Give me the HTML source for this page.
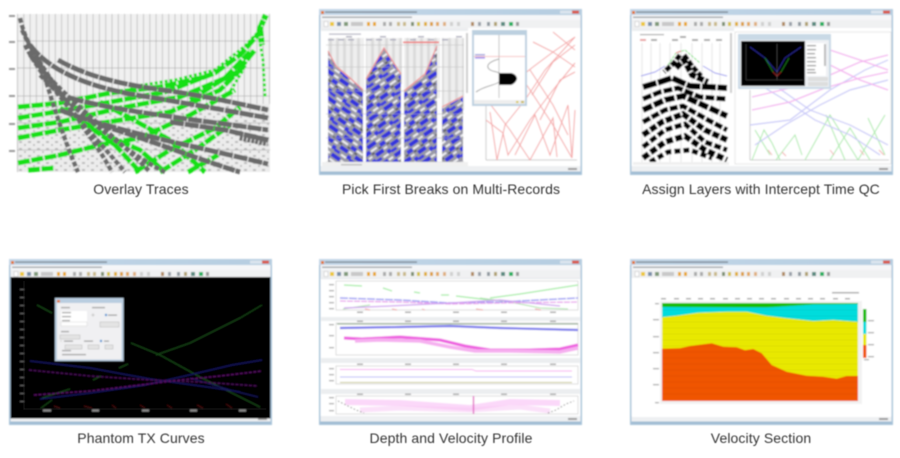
<!DOCTYPE html>
<html>
<head>
<meta charset="utf-8">
<style>
html,body{margin:0;padding:0;background:#fff;width:900px;height:458px;overflow:hidden}
#s{position:absolute;left:0;top:0}
.c{position:absolute;font:14px/16px "Liberation Sans",sans-serif;letter-spacing:.1px;color:#333;white-space:nowrap;transform:translateX(-50%);filter:blur(.4px)}
</style>
</head>
<body>
<svg id="s" width="900" height="458" viewBox="0 0 900 458" xmlns="http://www.w3.org/2000/svg">
<defs>
<filter id="b" x="-5%" y="-5%" width="110%" height="110%"><feGaussianBlur stdDeviation="0.75"/></filter>
<linearGradient id="tb" x1="0" y1="0" x2="1" y2="0"><stop offset="0" stop-color="#c3d7e8"/><stop offset="1" stop-color="#b5cde0"/></linearGradient>
<pattern id="grid1" width="6.3" height="158" patternUnits="userSpaceOnUse" x="17" y="14"><rect width="6.3" height="158" fill="#f1f1f1"/><rect width="1" height="158" fill="#c4c4c4"/></pattern>
<pattern id="speck" width="9" height="7" patternUnits="userSpaceOnUse"><rect width="9" height="7" fill="#ececec"/><rect x="1" y="1" width="3" height="2" fill="#bcbcbc"/><rect x="6" y="4" width="2" height="2" fill="#c4c4c4"/></pattern>
<g id="sp"><rect width="18" height="22" fill="#9a9aa6"/><rect x="0" y="0" width="10" height="4" fill="#3636dc"/><rect x="12" y="5" width="6" height="4" fill="#3a3ae0"/><rect x="3" y="11" width="9" height="4" fill="#3636dc"/><rect x="14" y="15" width="4" height="4" fill="#3a3ae0"/><rect x="0" y="17" width="6" height="3" fill="#4040e0"/><rect x="11" y="1" width="5" height="2" fill="#eeeef2"/><rect x="1" y="6" width="7" height="2" fill="#eeeef2"/><rect x="13" y="11" width="4" height="2" fill="#e8e8ee"/><rect x="8" y="18" width="6" height="2" fill="#eeeef2"/><rect x="0" y="9" width="3" height="2" fill="#606068"/><rect x="9" y="8" width="3" height="2" fill="#606068"/></g>
<pattern id="seis" width="18" height="22" patternUnits="userSpaceOnUse" patternTransform="rotate(35)"><use href="#sp"/></pattern>
<pattern id="seis2" width="18" height="22" patternUnits="userSpaceOnUse" patternTransform="rotate(-35)"><use href="#sp"/></pattern>
<pattern id="vs" width="7" height="10" patternUnits="userSpaceOnUse"><rect width="7" height="10" fill="#efefef"/><rect width="3" height="10" fill="#dcdcdc"/></pattern>
<g id="win">
<rect width="263" height="166" fill="#a8c3d9"/>
<rect x="0" y="0" width="263" height="6" fill="url(#tb)"/>
<rect x="2" y="2" width="3" height="3" fill="#e2762a"/>
<rect x="6" y="2.4" width="92" height="1.4" fill="#7d8894"/>
<rect x="241" y="1.6" width="6" height="3" fill="#dbe5ee"/>
<rect x="247" y="1.6" width="6" height="3" fill="#dbe5ee"/>
<rect x="253" y="1.6" width="7" height="3" fill="#d9574a"/>
<rect x="1.5" y="6" width="260" height="158" fill="#fff"/>
<rect x="1.5" y="6" width="260" height="5" fill="#f5f6f8"/>
<rect x="3" y="7.6" width="90" height="1.3" fill="#999ea5"/>
<rect x="1.5" y="11" width="260" height="8" fill="#f0f1f2"/>
<rect x="5" y="12.5" width="4" height="5" fill="#fff" stroke="#bbb" stroke-width=".5"/>
<rect x="11" y="13" width="4" height="4" fill="#ecc838"/>
<rect x="18" y="13" width="4" height="4" fill="#7a8fa8"/>
<rect x="25" y="13" width="4" height="4" fill="#7f9a78"/>
<rect x="32" y="13" width="12" height="4" fill="#c8c8c8"/>
<rect x="48" y="13" width="3" height="4" fill="#e8a820"/>
<rect x="54" y="13" width="3" height="4" fill="#e8a820"/>
<rect x="64" y="13" width="3" height="4" fill="#aaa"/>
<rect x="70" y="13" width="3" height="4" fill="#aaa"/>
<rect x="78" y="13" width="3" height="4" fill="#c9b98a"/>
<rect x="84" y="13" width="3" height="4" fill="#c9b98a"/>
<rect x="92" y="13" width="3" height="4" fill="#7d8f70"/>
<rect x="98" y="13" width="3" height="4" fill="#d4c040"/>
<rect x="105" y="13" width="3" height="4" fill="#e0b030"/>
<rect x="111" y="13" width="3" height="4" fill="#dca040"/>
<rect x="117" y="13" width="3" height="4" fill="#e2a860"/>
<rect x="124" y="13" width="3" height="4" fill="#e0b080"/>
<rect x="131" y="13" width="3" height="4" fill="#d0d0d0"/>
<rect x="138" y="13" width="3" height="4" fill="#d0d0d0"/>
<rect x="152" y="13" width="3" height="4" fill="#b08a60"/>
<rect x="159" y="13" width="3" height="4" fill="#9aa0a8"/>
<rect x="168" y="13" width="3" height="4" fill="#909aa0"/>
<rect x="175" y="13" width="3" height="4" fill="#b0a070"/>
<rect x="182" y="13" width="4" height="4" fill="#5a8a80"/>
<rect x="190" y="13" width="4" height="4" fill="#20b060"/>
<rect x="197" y="13" width="3" height="4" fill="#999"/>
<rect x="1.5" y="157" width="260" height="5.5" fill="#eef0f2"/>
<rect x="249" y="159" width="9" height="2" fill="#999"/>
<rect x="1.5" y="162.5" width="260" height="2" fill="#9fbcd3"/>
</g>
</defs>

<g filter="url(#b)">
<!-- Panel 1 -->
<rect x="17" y="14" width="253" height="158" fill="url(#grid1)"/>
<rect x="18" y="104" width="252" height="68" fill="url(#speck)"/>
<g stroke="#9d9d9d" stroke-width=".6"><path d="M17 41H270M17 68H270M17 96H270M17 123H270M17 150H270"/></g>
<g fill="#999"><rect x="9" y="15" width="6" height="2"/><rect x="9" y="41" width="6" height="2"/><rect x="9" y="68" width="6" height="2"/><rect x="9" y="95" width="6" height="2"/><rect x="9" y="123" width="6" height="2"/><rect x="9" y="150" width="6" height="2"/></g>
<g fill="none" stroke="#12e012" stroke-linecap="butt">
<g stroke-width="5" stroke-dasharray="12 1.5">
<path d="M18 107L60 103 110 93 160 87 205 77"/>
<path d="M18 118L55 112 105 103 165 92 215 73 240 55 262 30"/>
<path d="M18 128L60 122 120 108 180 97 235 74 255 50"/>
<path d="M18 138L60 130 120 120 170 112 220 90 245 65"/>
<path d="M18 163L60 155 100 145 140 138 190 115 235 90"/>
<path d="M100 102L130 118 170 140 205 172"/>
<path d="M60 108L105 135 140 150 165 172"/>
<path d="M80 120L115 145 140 172"/>
<path d="M135 172L170 150 215 128 240 107"/>
<path d="M160 172L195 150 230 125"/>
<path d="M28 170L55 168"/>
<path d="M188 172L218 155"/>
<path d="M190 100L225 78 250 52"/>
</g>
<g stroke-width="3" stroke-dasharray="3 2">
<path d="M130 87L175 80 215 70 245 46 262 28"/>
<path d="M264 15L258 30 263 60 265 98"/>
<path d="M228 95L243 70 250 50"/>
</g>
<path d="M266 15L260 28 262 45" stroke-width="6" stroke-dasharray="5 1"/>
</g>
<g fill="none" stroke="#6a6a6a">
<g stroke-width="5">
<path d="M58 60C90 78 125 85 170 91 205 96 240 104 268 110" stroke-dasharray="14 1"/>
<path d="M30 45C50 72 90 86 130 94 180 102 235 112 268 118" stroke-dasharray="14 1"/>
<path d="M70 98C120 112 200 120 268 130" stroke-dasharray="14 1"/>
<path d="M60 110C110 130 190 145 268 164" stroke-dasharray="14 1"/>
<path d="M100 125C150 140 200 160 240 172" stroke-dasharray="12 1"/>
<path d="M170 122L225 130 268 140" stroke-dasharray="14 1"/>
</g>
<g stroke-width="4.5" stroke-dasharray="5 2">
<path d="M20 18C24 35 30 48 40 62 52 100 62 135 78 172"/>
<path d="M22 30C35 60 70 105 85 130 100 150 108 165 112 172"/>
<path d="M25 45C45 85 85 125 125 172"/>
<path d="M30 55C60 95 115 135 150 172"/>
<path d="M40 75C80 115 130 155 165 172"/>
</g>
<path d="M240 136L268 142" stroke-width="9" stroke-dasharray="3 1"/>
</g>

<!-- Panel 2 -->
<use href="#win" x="319" y="9"/>
<rect x="321" y="28" width="147" height="3" fill="#eceef0"/>
<rect x="323" y="33" width="140" height="130" fill="#fff"/>
<rect x="328" y="38" width="36" height="58" fill="url(#vs)"/>
<rect x="366" y="38" width="36" height="46" fill="url(#vs)"/>
<rect x="404" y="38" width="36" height="60" fill="url(#vs)"/>
<rect x="442" y="38" width="22" height="72" fill="url(#vs)"/>
<path d="M328 52L336 67 350 79 363 90V162H328Z" fill="url(#seis)"/>
<path d="M366 80L384 49 401 75V162H366Z" fill="url(#seis2)"/>
<path d="M404 92L425 75 437 47V162H404Z" fill="url(#seis2)"/>
<path d="M442 108L463 97V162H442Z" fill="url(#seis2)"/>
<g fill="none" stroke="#f09090" stroke-width="1.2"><path d="M328 51L336 66 350 78 363 90"/><path d="M366 79L384 48 401 74"/><path d="M404 91L425 74 437 46"/><path d="M442 107L463 96"/></g>
<rect x="403" y="41.5" width="36" height="1.6" fill="#f07878"/>
<g fill="#b0b0c0"><rect x="328" y="39" width="6" height="1.5"/><rect x="338" y="39" width="6" height="1.5"/><rect x="348" y="39" width="6" height="1.5"/><rect x="366" y="39" width="6" height="1.5"/><rect x="376" y="39" width="6" height="1.5"/><rect x="390" y="39" width="6" height="1.5"/><rect x="410" y="39" width="6" height="1.5"/><rect x="428" y="39" width="6" height="1.5"/><rect x="442" y="39" width="6" height="1.5"/><rect x="346" y="36" width="6" height="1.5"/><rect x="380" y="36" width="6" height="1.5"/><rect x="418" y="36" width="6" height="1.5"/><rect x="456" y="36" width="6" height="1.5"/><rect x="329" y="33.5" width="32" height="1.2"/></g>
<g stroke="#bbb" stroke-width=".5"><path d="M326 45H464M326 67H464M326 91H464M326 114H464M326 138H464M326 162H464"/></g>
<rect x="466" y="33" width="2" height="60" fill="#ccc"/>
<rect x="322" y="162" width="146" height="4" fill="#f0f0f0"/>
<rect x="341" y="164" width="21" height="1.4" fill="#bbb"/>
<rect x="469" y="31" width="108" height="134" fill="#fff"/>
<path d="M486 36V160H577" fill="none" stroke="#999" stroke-width=".5"/>
<g fill="none" stroke="#f4a4a4" stroke-width="1">
<path d="M486 120L503 133 508 155 530 120 553 90 575 63"/>
<path d="M487 100L510 130 530 160"/>
<path d="M497 160L505 125 525 100 545 70 575 37"/>
<path d="M490 112L497 160"/>
<path d="M515 155L535 115 550 155 568 105 572 158 575 110"/>
<path d="M530 160L553 118 557 157"/>
<path d="M510 60L530 90 553 125 572 158"/>
<path d="M530 70L553 105 568 135"/>
<path d="M533 42L553 52 575 67"/>
<path d="M553 32L575 50"/>
<path d="M575 37L553 52 533 67 510 85"/>
<path d="M532 95L553 62 575 45"/>
<path d="M540 120L560 80 575 72"/>
</g>
<rect x="472" y="30" width="55" height="76" fill="#bcd0e0"/>
<rect x="474" y="35" width="51" height="65" fill="#fff"/>
<rect x="474" y="100" width="51" height="4" fill="#eee"/>
<rect x="516" y="101" width="2.5" height="2" fill="#d8c848"/><rect x="521" y="101" width="3" height="2" fill="#c8b848"/>
<path d="M499 35V98" stroke="#999" stroke-width=".6"/>
<path d="M474 56.5H525" stroke="#f4b0b0" stroke-width=".8"/>
<rect x="475" y="54" width="10" height="1.6" fill="#a8a8e0"/><rect x="475" y="57" width="10" height="1.6" fill="#a090f0"/>
<path d="M499 59C488 62 486 66 489 69 492 72 496 71 499 73M499 82C494 86 486 85 476 92" fill="none" stroke="#888" stroke-width=".8"/>
<path d="M499 73H510C514 73 517 76 517 79 516 82 513 85 510 85H499Z" fill="#000"/>

<!-- Panel 3 -->
<use href="#win" x="630" y="9"/>
<rect x="632" y="28" width="102" height="3" fill="#eceef0"/>
<g stroke="#ccc" stroke-width=".5"><path d="M642 43V162M651 43V162M660 43V162M670 43V162M681 43V162M692 43V162M702 43V162M712 43V162M720 43V162"/></g>
<g fill="#aaa"><rect x="640" y="39" width="6" height="2" fill="#e8a0a0"/><rect x="651" y="39" width="6" height="2"/><rect x="672" y="39" width="6" height="2"/><rect x="692" y="39" width="6" height="2"/><rect x="704" y="39" width="6" height="2"/><rect x="716" y="39" width="6" height="2"/><rect x="680" y="36" width="6" height="2"/><rect x="640" y="34" width="24" height="1.2"/></g>
<path d="M641 76L655 72 665 66" fill="none" stroke="#9b9bef" stroke-width="1"/>
<path d="M703 66L715 73 727 76" fill="none" stroke="#9b9bef" stroke-width="1"/>
<path d="M668 65L676 53 685 50 700 63" fill="none" stroke="#7be27b" stroke-width="1" stroke-dasharray="3 1"/>
<path d="M676 53L681 51" stroke="#e87a7a" stroke-width="1"/>
<g fill="none" stroke="#000">
<path d="M680 55L674 63 664 72" stroke-width="5" stroke-dasharray="6 1.5"/>
<path d="M684 55L692 66 701 76" stroke-width="5" stroke-dasharray="6 1.5"/>
<path d="M676 68L684 60 692 75 708 82" stroke-width="6" stroke-dasharray="7 1.5"/>
<path d="M643 87L660 82 672 78 690 86 710 87 727 88" stroke-width="6" stroke-dasharray="14 1.5"/>
<path d="M643 99L660 92 678 88 700 97 727 99" stroke-width="5" stroke-dasharray="9 2"/>
<path d="M643 110L665 100 683 96 705 106 727 116" stroke-width="6" stroke-dasharray="10 2"/>
<path d="M643 122L665 110 683 106 708 120 727 130" stroke-width="5" stroke-dasharray="8 2"/>
<path d="M643 135L662 122 683 114 705 130 727 140" stroke-width="6" stroke-dasharray="7 2"/>
<path d="M643 147L665 130 685 124 705 142 727 150" stroke-width="5" stroke-dasharray="7 2.5"/>
<path d="M643 158L665 142 685 136 705 150 727 160" stroke-width="6" stroke-dasharray="7 2.5"/>
<path d="M650 162L668 152 690 150 712 158" stroke-width="5" stroke-dasharray="6 3"/>
</g>
<rect x="633" y="162" width="96" height="3" fill="#f0f0f0"/>
<rect x="730" y="33" width="2" height="60" fill="#ccc"/>
<rect x="735" y="32" width="156" height="132" fill="none" stroke="#ddd" stroke-width=".7"/>
<path d="M750 90V160H889" fill="none" stroke="#999" stroke-width=".5"/>
<g fill="none" stroke="#a8eaa8" stroke-width="1">
<path d="M752 160L764 130 772 143 780 160"/><path d="M755 130L770 155"/><path d="M776 160L795 135 802 155"/>
<path d="M805 160L830 115 855 155 858 160"/><path d="M830 160L850 128 870 160"/><path d="M826 115L845 160"/><path d="M858 160L885 115"/><path d="M868 118L885 155"/>
</g>
<g fill="none" stroke="#f2a8a8" stroke-width=".9"><path d="M768 150L772 155M782 152L786 156M830 150L834 155M860 150L864 155M879 150L884 155"/></g>
<g fill="none" stroke="#c8c8f8" stroke-width="1.2">
<path d="M750 125L790 120 830 90 865 70 888 60"/>
<path d="M755 145L785 125 820 105 850 90 888 80"/>
<path d="M752 80L785 100 815 120 850 135 880 155"/>
<path d="M770 82L810 110 850 125 888 145"/>
</g>
<g fill="none" stroke="#f4b4f0" stroke-width="1.3">
<path d="M752 97L790 88 830 75 860 62 888 55"/>
<path d="M752 110L790 102 825 88 860 78 888 72"/>
<path d="M800 48L830 50 860 60 888 70"/>
<path d="M830 65L860 80 888 90"/>
</g>
<rect x="738" y="34" width="93" height="55" fill="#c9d9e6"/>
<rect x="740" y="40" width="89" height="47" fill="#eef1f4"/>
<rect x="741" y="41" width="64" height="45" fill="#000"/>
<g fill="none" stroke-width=".8"><path d="M750 47L765 58 777 72" stroke="#2c2c9c"/><path d="M801 47L785 58 777 72" stroke="#2c2c9c"/><path d="M765 58L773 72M789 58L781 72" stroke="#1c7c1c"/><path d="M773 72L777 76 781 72" stroke="#a02020"/><path d="M777 44V80" stroke="#666" stroke-width=".5"/><path d="M746 44V80H803" stroke="#555" stroke-width=".5"/></g>
<rect x="806" y="43" width="20" height="33" fill="#fff"/>
<g fill="#999"><rect x="807" y="45" width="9" height="1.3"/><rect x="807" y="49" width="9" height="1.3"/><rect x="807" y="53" width="8" height="1.3"/><rect x="807" y="57" width="9" height="1.3"/><rect x="807" y="61" width="9" height="1.3"/><rect x="807" y="65" width="9" height="1.3"/><rect x="807" y="69" width="8" height="1.3"/><rect x="807" y="72" width="9" height="1.3"/></g>
<rect x="824" y="44" width="2" height="22" fill="#bbb"/>
<rect x="808" y="77" width="20" height="4" fill="#ddd"/><rect x="808" y="82" width="20" height="4" fill="#ddd"/>

<!-- Panel 4 -->
<use href="#win" x="9" y="259"/>
<rect x="10.5" y="277" width="260" height="141.5" fill="#000"/>
<path d="M24 281V409H266" fill="none" stroke="#2a2a2a" stroke-width=".7"/>
<g fill="none" stroke-width="1">
<path d="M37 305L52 313" stroke="#174a17"/>
<path d="M131 343L160 355 200 377 240 397 260 407" stroke="#174a17"/>
<path d="M156 355L190 343 240 318 262 305" stroke="#174a17"/>
<path d="M119 368L128 364M93 380L101 376M42 398L70 389" stroke="#174a17"/>
<path d="M41 408L52 400" stroke="#174a17"/>
<path d="M30 361L90 368 150 379 215 388 240 392" stroke="#14145e" stroke-width="1.3"/>
<path d="M40 399L90 393 145 385 185 376 232 365 262 360" stroke="#14145e" stroke-width="1.3"/>
<path d="M190 378L230 390 258 397" stroke="#14145e"/>
<path d="M29 370L90 376 150 380 200 382 258 386" stroke="#4a1058" stroke-dasharray="3 1.5" stroke-width="1.3"/>
<path d="M34 395L90 391 140 385 180 380 220 376 262 371" stroke="#5a1068" stroke-dasharray="3 1.5" stroke-width="1.3"/>
<path d="M54 406L60 408M84 406L92 408M112 405L116 408M140 405L145 408M167 405L172 408M197 405L203 408M226 404L232 408" stroke="#4a0c0c"/>
</g>
<g fill="#888"><rect x="43" y="409.5" width="8" height="2"/><rect x="92" y="409.5" width="7" height="2"/><rect x="142" y="409.5" width="7" height="2"/><rect x="190" y="409.5" width="7" height="2"/><rect x="239" y="409.5" width="7" height="2"/></g>
<g fill="#666"><rect x="20" y="289" width="4" height="1"/><rect x="20" y="297" width="4" height="1"/><rect x="20" y="305" width="4" height="1"/><rect x="20" y="313" width="4" height="1"/><rect x="20" y="321" width="4" height="1"/><rect x="20" y="329" width="4" height="1"/><rect x="20" y="337" width="4" height="1"/><rect x="20" y="345" width="4" height="1"/><rect x="20" y="353" width="4" height="1"/><rect x="20" y="361" width="4" height="1"/><rect x="20" y="369" width="4" height="1"/><rect x="20" y="377" width="4" height="1"/><rect x="20" y="385" width="4" height="1"/><rect x="20" y="393" width="4" height="1"/><rect x="20" y="401" width="4" height="1"/></g>
<rect x="55" y="298" width="68.5" height="63" fill="#b9cde0"/>
<rect x="57" y="303" width="64.5" height="56.5" fill="#f0f0f2"/>
<rect x="57" y="300" width="3" height="2.5" fill="#e2762a"/>
<rect x="61" y="311" width="26" height="15" fill="#fff"/>
<rect x="61" y="322" width="26" height="4" fill="#fff" stroke="#ccc" stroke-width=".4"/>
<g fill="#999"><rect x="61" y="307" width="9" height="1.2"/><rect x="92" y="307" width="13" height="1.2"/><rect x="62" y="312" width="9" height="1.2"/><rect x="62" y="316" width="9" height="1.2"/><rect x="62" y="320" width="8" height="1.2"/><rect x="61" y="331" width="8" height="1.2"/><rect x="62" y="350" width="9" height="1.2"/><rect x="62" y="354" width="24" height="1.2"/></g>
<circle cx="93" cy="315" r="1.1" fill="#ddd" stroke="#999" stroke-width=".3"/><circle cx="106" cy="315" r="1.2" fill="#4a90d0"/><rect x="108" y="314.5" width="9" height="1.2" fill="#999"/>
<rect x="100" y="322" width="19" height="5" fill="#e4e4e4" stroke="#aaa" stroke-width=".4"/>
<rect x="60" y="335" width="20" height="4" fill="#e4e4e4" stroke="#aaa" stroke-width=".4"/>
<circle cx="61" cy="341" r="1" fill="#ddd"/><circle cx="101" cy="341" r="1.2" fill="#4a90d0"/>
<g fill="#999"><rect x="64" y="340.5" width="9" height="1.2"/><rect x="84" y="340.5" width="9" height="1.2"/><rect x="104" y="340.5" width="5" height="1.2"/></g>
<rect x="65" y="345" width="17" height="4" fill="#e4e4e4" stroke="#aaa" stroke-width=".4"/><rect x="88" y="345" width="11" height="4" fill="#e4e4e4" stroke="#aaa" stroke-width=".4"/><rect x="105" y="345" width="8" height="4" fill="#e4e4e4" stroke="#aaa" stroke-width=".4"/>

<!-- Panel 5 -->
<use href="#win" x="319" y="259"/>
<rect x="321" y="278" width="259" height="1" fill="#e4e6ea"/>
<rect x="321" y="317" width="259" height="4" fill="#eceef0"/>
<rect x="321" y="358" width="259" height="5" fill="#eceef0"/>
<rect x="321" y="389" width="259" height="5" fill="#eceef0"/>
<rect x="336" y="281" width="242" height="29" fill="none" stroke="#c8c8c8" stroke-width=".6"/>
<rect x="336" y="323" width="242" height="32" fill="none" stroke="#c8c8c8" stroke-width=".6"/>
<rect x="336" y="366" width="242" height="18" fill="none" stroke="#c8c8c8" stroke-width=".6"/>
<rect x="336" y="396" width="242" height="18" fill="none" stroke="#c8c8c8" stroke-width=".6"/>
<g fill="#aaa">
<rect x="357" y="311.5" width="6" height="1.5"/><rect x="405" y="311.5" width="6" height="1.5"/><rect x="453" y="311.5" width="6" height="1.5"/><rect x="501" y="311.5" width="6" height="1.5"/><rect x="550" y="311.5" width="6" height="1.5"/>
<rect x="357" y="320.5" width="6" height="1.5"/><rect x="405" y="320.5" width="6" height="1.5"/><rect x="453" y="320.5" width="6" height="1.5"/><rect x="501" y="320.5" width="6" height="1.5"/><rect x="550" y="320.5" width="6" height="1.5"/>
<rect x="357" y="363.5" width="6" height="1.5"/><rect x="405" y="363.5" width="6" height="1.5"/><rect x="453" y="363.5" width="6" height="1.5"/><rect x="501" y="363.5" width="6" height="1.5"/><rect x="550" y="363.5" width="6" height="1.5"/>
<rect x="357" y="393.5" width="6" height="1.5"/><rect x="405" y="393.5" width="6" height="1.5"/><rect x="453" y="393.5" width="6" height="1.5"/><rect x="501" y="393.5" width="6" height="1.5"/><rect x="550" y="393.5" width="6" height="1.5"/>
<rect x="329" y="284" width="5" height="1.3"/><rect x="329" y="290" width="5" height="1.3"/><rect x="329" y="296" width="5" height="1.3"/><rect x="329" y="302" width="5" height="1.3"/><rect x="329" y="308" width="5" height="1.3"/>
<rect x="329" y="324" width="5" height="1.3"/><rect x="329" y="335" width="5" height="1.3"/><rect x="329" y="347" width="5" height="1.3"/>
<rect x="329" y="368" width="5" height="1.3"/><rect x="329" y="374" width="5" height="1.3"/><rect x="329" y="380" width="5" height="1.3"/>
<rect x="329" y="397" width="5" height="1.3"/><rect x="329" y="403" width="5" height="1.3"/><rect x="329" y="410" width="5" height="1.3"/>
</g>
<g fill="none">
<path d="M344 285L362 286M383 288L392 291M414 292L420 293M441 295L449 295M456 296L490 300M490 298L520 294 578 285" stroke="#a0eca0" stroke-width="1.2"/>
<path d="M343 309L370 305M480 298L510 302 540 308 568 309" stroke="#a8e0a8" stroke-width="1"/>
<path d="M340 298L400 300 450 303M450 303L500 302 578 298" stroke="#a0a0f4" stroke-width="1.5" stroke-dasharray="8 1"/>
<path d="M340 301L400 302 450 304 500 303 578 302" stroke="#e8a0ec" stroke-width="1.3" stroke-dasharray="6 1"/>
<path d="M344 308L390 306 450 303 500 300 560 306" stroke="#cfa0f0" stroke-width="1.2"/>
<path d="M365 309L370 310M392 309L397 310M422 309L425 310M476 309L483 310M535 309L541 310" stroke="#f0a0a0" stroke-width=".9"/>
<path d="M337 324H578" stroke="#7ea07e" stroke-width=".9"/>
<path d="M340 328L400 327 450 326 500 328 578 330" stroke="#6060e8" stroke-width="2.2" opacity=".85"/>
<path d="M344 338L362 339 400 337 440 340 465 346 490 350 530 350 560 349 578 345" stroke="#ee60e0" stroke-width="3"/>
<path d="M355 341L380 340 420 341 450 347 475 351 510 351 560 352 578 348" stroke="#f6b0f0" stroke-width="3.5"/>
<path d="M340 369.5L472 369.5 476 371 572 371" stroke="#f8a8f0" stroke-width=".9"/>
<path d="M340 377H572" stroke="#b8b8f8" stroke-width="1.1"/>
<path d="M340 382.5H572" stroke="#c8c890" stroke-width=".9"/>
<path d="M345 402L400 403 470 408 510 402 560 403" stroke="#f8b8f4" stroke-width="6" opacity=".55"/>
<path d="M360 410L400 408 470 410 520 407 550 411" stroke="#f8c8f4" stroke-width="5" opacity=".55"/>
<path d="M473.5 396V414" stroke="#e060c0" stroke-width="1.3"/>
<path d="M338 401L346 405 356 410 364 413M548 413L556 410 566 404 574 401" stroke="#777" stroke-width=".9" stroke-dasharray="1.5 2"/>
</g>

<!-- Panel 6 -->
<use href="#win" x="630" y="259"/>
<rect x="632" y="278" width="259" height="139" fill="#fff"/>
<g fill="#aaa"><rect x="661" y="298" width="5" height="1.5"/><rect x="674" y="298" width="5" height="1.5"/><rect x="686" y="298" width="5" height="1.5"/><rect x="698" y="298" width="5" height="1.5"/><rect x="710" y="298" width="5" height="1.5"/><rect x="723" y="298" width="5" height="1.5"/><rect x="735" y="298" width="5" height="1.5"/><rect x="747" y="298" width="5" height="1.5"/><rect x="759" y="298" width="5" height="1.5"/><rect x="771" y="298" width="5" height="1.5"/><rect x="784" y="298" width="5" height="1.5"/><rect x="796" y="298" width="5" height="1.5"/><rect x="808" y="298" width="5" height="1.5"/><rect x="820" y="298" width="5" height="1.5"/><rect x="833" y="298" width="5" height="1.5"/><rect x="845" y="298" width="5" height="1.5"/><rect x="832" y="292" width="27" height="1.5"/>
<rect x="655" y="303" width="4" height="1.3"/><rect x="653" y="319" width="6" height="1.3"/><rect x="653" y="336" width="6" height="1.3"/><rect x="653" y="352" width="6" height="1.3"/><rect x="653" y="368" width="6" height="1.3"/><rect x="653" y="384" width="6" height="1.3"/><rect x="655" y="402" width="4" height="1.3"/>
<rect x="868" y="320" width="6" height="1.3"/><rect x="868" y="332" width="6" height="1.3"/><rect x="868" y="344" width="6" height="1.3"/><rect x="868" y="356" width="6" height="1.3"/><rect x="864" y="359" width="5" height="1.3"/></g>
<rect x="660" y="301" width="202" height="103" fill="#f2f2f2"/>
<rect x="662" y="303" width="196" height="98" fill="#f05400"/>
<path d="M662 303H858V376L846.7 376 836.7 378.7 823.3 376.7 806.7 375.7 786.7 371.7 771.7 365 761.7 353.3 753.3 349 745 350.3 736.7 347.3 723.3 346.7 711.7 343.3 690 346 680 348.3 662 348.7Z" fill="#e8e800"/>
<path d="M662 303H858V321.7L833.3 320 813.3 321 786.7 318.3 766.7 315.7 746.7 311.7 726.7 311.7 698.3 312.7 676.7 315.7 662 317.3Z" fill="#00dcdc"/>
<path d="M662 303H858V304L813 304.5 790 306 766 307.5 662 307Z" fill="#18bc00"/>
<g stroke="#000" stroke-opacity=".07" stroke-width=".5"><path d="M662 310H858M662 316H858M662 322H858M662 328H858M662 334H858M662 340H858M662 346H858M662 352H858M662 358H858M662 364H858M662 370H858M662 376H858M662 382H858M662 388H858M662 394H858"/></g>
<rect x="863" y="309" width="3.5" height="13" fill="#18bc00"/>
<rect x="863" y="322" width="3.5" height="12" fill="#00dcdc"/>
<rect x="863" y="334" width="3.5" height="11" fill="#e8e800"/>
<rect x="863" y="345" width="3.5" height="13" fill="#f05400"/>
</g>
</svg>
<div class="c" style="left:141px;top:181px">Overlay Traces</div>
<div class="c" style="left:451px;top:181px">Pick First Breaks on Multi-Records</div>
<div class="c" style="left:761px;top:181px">Assign Layers with Intercept Time QC</div>
<div class="c" style="left:141px;top:430px">Phantom TX Curves</div>
<div class="c" style="left:451px;top:430px">Depth and Velocity Profile</div>
<div class="c" style="left:761px;top:430px">Velocity Section</div>
</body>
</html>
